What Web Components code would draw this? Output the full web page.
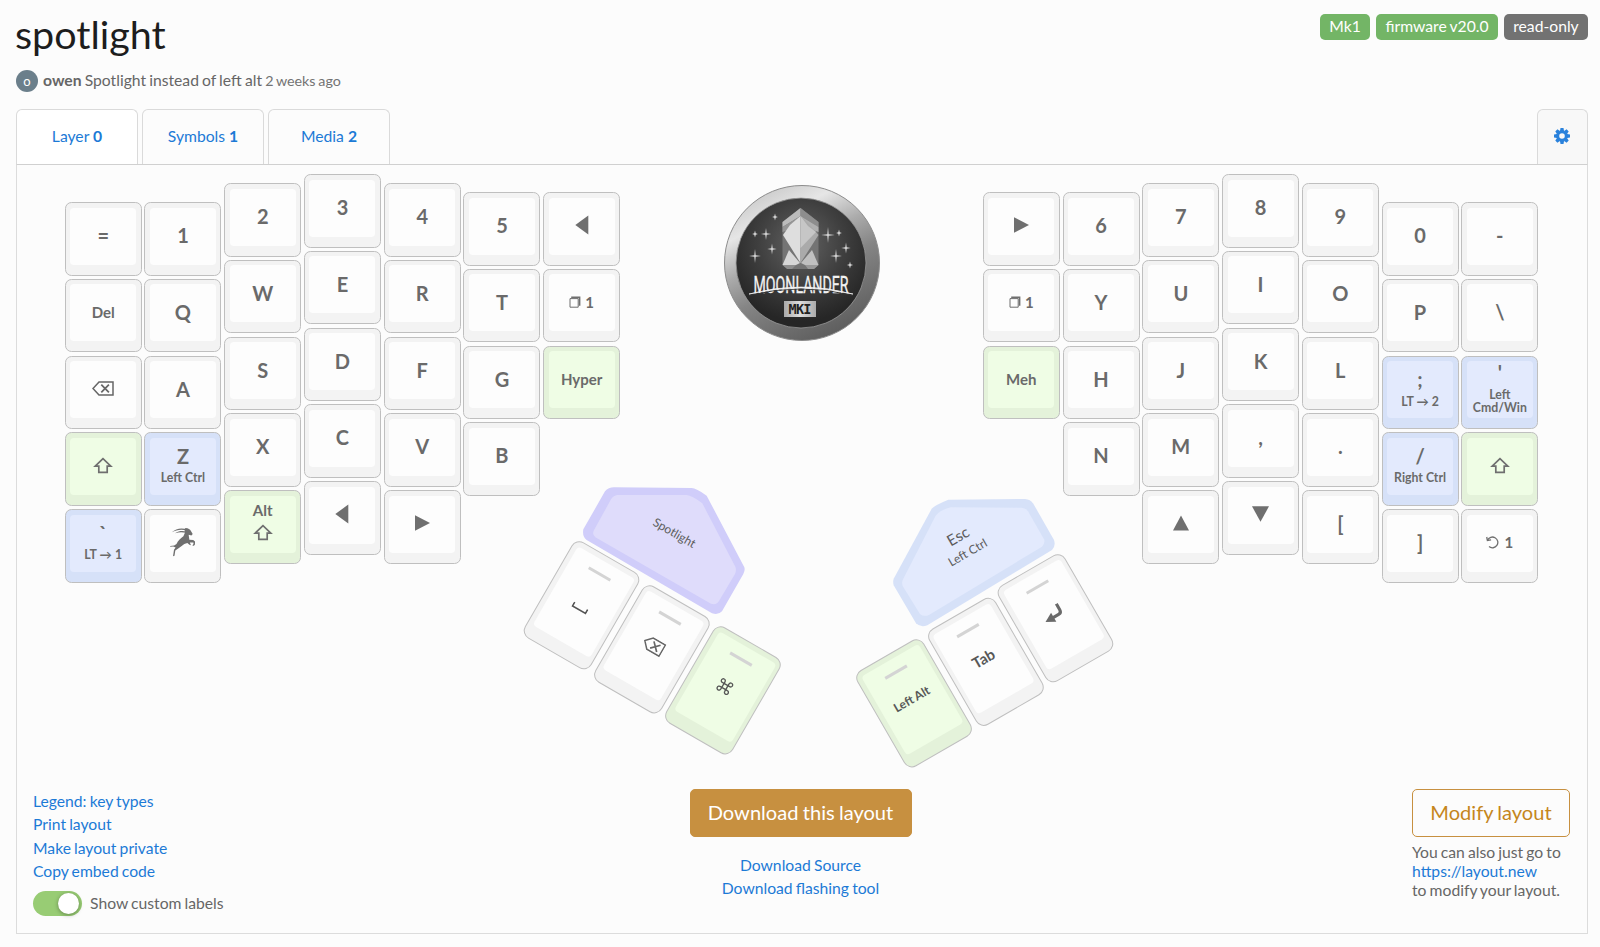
<!DOCTYPE html>
<html lang="en">
<head>
<meta charset="utf-8">
<title>spotlight</title>
<style>
	body {
		margin: 0;
		background: #fcfcfc;
		color: #666;
		font: 15.7px/1.2 Lato, "Liberation Sans", sans-serif;
		word-spacing: -.9px;
	}
</style>
</head>
<body>
<layout-page></layout-page>

<script>
// Small drawings used on the key caps
const ICONS = {
	left: '<svg width="14" height="20" viewBox="0 0 14 20"><path d="M13.3 .6v18.8L.3 10z" fill="#6f6f6f"/></svg>',
	right: '<svg width="15" height="16" viewBox="0 0 15 16"><path d="M0 .3v15.4L15 8z" fill="#6f6f6f"/></svg>',
	up: '<svg width="16" height="16" viewBox="0 0 16 16"><path d="M0 15.5h16L8 .5z" fill="#6f6f6f"/></svg>',
	down: '<svg width="17" height="16" viewBox="0 0 17 16"><path d="M0 .3h17L8.5 15.7z" fill="#6f6f6f"/></svg>',
	shift: '<svg width="20" height="17" viewBox="0 0 20 17" fill="none" stroke="#6f6f6f" stroke-width="1.7"><path d="M10 1.6L2.2 9.1h3.6v6.2h8.4V9.1h3.6z"/></svg>',
	back: '<svg width="22" height="15" viewBox="0 0 22 15" fill="none" stroke="#666" stroke-width="1.5"><path d="M7 1h14v13H7L1 7.5z"/><path d="M9.3 3.6l7.6 7.8M16.9 3.6l-7.6 7.8" stroke-width="1.7"/></svg>',
	layer: '<svg width="12" height="12" viewBox="0 0 12 12" fill="none" stroke="#6f6f6f"><path d="M1 2.6h8.2v8.6H1z" stroke-width="1"/><path d="M2.2 1.2h8.4v8.6" stroke-width="1.6"/></svg>',
	undo: '<svg width="14" height="13" viewBox="0 0 14 13" fill="none" stroke="#6f6f6f" stroke-width="1.3"><path d="M1.500 4.200A5.400 5.400 0 1 1 3 10.600"/><path d="M.7 1l.7 3.400 3.700-.5"/></svg>',
	space: '<svg style="margin-top:14px" width="17" height="6" viewBox="0 0 17 6" fill="none" stroke="#555" stroke-width="1.700"><path d="M1 0v4.600h15V0"/></svg>',
	cmd: '<svg width="14.5" height="14.5" viewBox="0 0 16 16" fill="none" stroke="#555" stroke-width="1.5"><path d="M5.5 5.5H3.4a2.2 2.2 0 1 1 2.1-2.1v9.2a2.2 2.2 0 1 1-2.1-2.1h9.2a2.2 2.2 0 1 1-2.1 2.1V3.4a2.2 2.2 0 1 1 2.1 2.1z"/></svg>',
	enter: '<svg width="21" height="17" viewBox="0 0 20 16"><path d="M17.6 .3v6.500q0 3.400-3.200 3.400H7" fill="none" stroke="#6a6a6a" stroke-width="3"/><path d="M0 10.200l9-5v10z" fill="#6a6a6a"/></svg>',
	goat: '<svg width="25" height="30" viewBox="0 0 25 30" fill="#6f6f6f"><path d="M1.800 5.200C6 1.300 12 .4 17.500 2.600L17 3.600C12 2 6.500 2.600 1.800 5.200z"/><path d="M5 6.200C9 3.800 13 3.600 16.500 4.800l-.3 1C12.500 5 9 5 5 6.200z"/><path d="M15.500.9c3 .3 4.500 1.400 5.300 2.800l1.900 3.400-1.300 1.300-2.600-.6c-.3 1.700.7 3.400.5 5l3.900.2 2 1.600-.4 3.400-1.800 1-.5-.7 1-1.300-.1-1.600-3.600.1 1.200 2.700-1.600-.5-2-1.800c-2.200.5-4 1.400-5.700 3.100l-3.500 2.600-2.900 1.900-.8 5.300-1.500.5 1-6.600 1.600-2.300-2.400-.8-3 .2v-.8l4-.6 2.300-1.300c1.300-3 3.900-5.700 6.900-7.800l1.500-3.600-.4-3.500z"/></svg>'
};

/**
 * One key cap. Attributes:
 *   main, sub - legends (text)
 *   icon, subicon - names from ICONS
 *   tone - green | blue
 *   thumb - taller cap with a homing bar
 */
class KeyCap extends HTMLElement {
	constructor() {
		super();
		this.attachShadow({mode:'open'});
	}

	connectedCallback() {
		const main = this.getAttribute('main') || '';
		const sub = this.getAttribute('sub');
		const icon = ICONS[this.getAttribute('icon')] || '';
		const subicon = ICONS[this.getAttribute('subicon')] || '';
		const small = main.length > 1 || (icon && main);
		this.shadowRoot.innerHTML = `
			<style>
				:host {
					box-sizing: border-box;
					display: flex;
					width: 77px;
					height: 73.5px;
					padding: 4.5px 4.5px 10px;
					border: 1px solid #bfbfbf;
					border-radius: 6.5px;
					background: #f3f3f3;
					color: #6a6a6a;
					font-weight: 700;
					text-align: center;
					word-spacing: 0;
				}
				:host([tone=green]) { background: #e4f2da; --face: #effde5; }
				:host([tone=blue]) { background: #d6e1f8; --face: #e3eafd; }
				:host([thumb]) {
					position: relative;
					height: 111px;
					padding: 5px 4.5px 13px;
					border-radius: 9px;
					color: #585858;
				}
				:host([thumb])::before {
					content: "";
					position: absolute;
					left: 25px;
					top: 17px;
					width: 25px;
					height: 3px;
					background: #d4d4d4;
				}
				.face {
					flex: 1;
					display: flex;
					flex-direction: column;
					align-items: center;
					justify-content: center;
					gap: 4.5px;
					padding-bottom: 2px;
					border-radius: 4px;
					background: var(--face, #fdfdfd);
				}
				:host([thumb]) .face { padding-bottom: 0; }
				.two { padding-bottom: 3px; }
				.stack { gap: 2.5px; padding-bottom: 8px; }
				.main {
					display: flex;
					align-items: center;
					gap: 4px;
					font-size: 20px;
					line-height: 22px;
				}
				.small { font-size: 15px; }
				.sub { font-size: 12.3px; line-height: 13.4px; margin: 0 4px; }
				:host([compact]) .small { font-size: 12.2px; }
				svg { display: block; }
			</style>
			<div class="face ${sub ? 'two' : ''} ${subicon ? 'stack' : ''}">
				<div class="main ${small ? 'small' : ''}">${icon}${main ? `<span>${main}</span>` : ''}</div>
				${sub ? `<div class="sub">${sub}</div>` : ''}${subicon}
			</div>
		`;
	}
}
customElements.define('key-cap', KeyCap);

// Vertical stack of keys, shifted down by its "drop"
class KeyColumn extends HTMLElement {
	constructor() {
		super();
		this.attachShadow({mode:'open'});
		this.shadowRoot.innerHTML = `
			<style>
				:host { display: flex; flex-direction: column; gap: 3.25px; }
			</style>
			<slot></slot>
		`;
	}

	connectedCallback() {
		this.style.marginTop = this.getAttribute('drop') + 'px';
	}
}
customElements.define('key-column', KeyColumn);

class MoonBadge extends HTMLElement {
	constructor() {
		super();
		this.attachShadow({mode:'open'});
		const star = (x, y, r) => `<path d="M${x} ${y - r}L${x + .7} ${y - .7}L${x + r * .85} ${y}L${x + .7} ${y + .7}L${x} ${y + r}L${x - .7} ${y + .7}L${x - r * .85} ${y}L${x - .7} ${y - .7}z"/>`;
		this.shadowRoot.innerHTML = `
			<style>
				:host { display: block; width: 156px; height: 156px; word-spacing: 0; }
				svg { display: block; }
			</style>
			<svg width="156" height="156" viewBox="0 0 156 156">
				<defs>
					<linearGradient id="ring" x1=".2" y1="0" x2=".7" y2="1">
						<stop offset="0" stop-color="#c4c4c4"/>
						<stop offset=".22" stop-color="#e6e6e6"/>
						<stop offset=".42" stop-color="#ababab"/>
						<stop offset=".6" stop-color="#858585"/>
						<stop offset="1" stop-color="#5b5b5b"/>
					</linearGradient>
					<radialGradient id="disc" cx=".5" cy=".35" r=".6">
						<stop offset="0" stop-color="#626262"/>
						<stop offset=".55" stop-color="#3f3f3f"/>
						<stop offset="1" stop-color="#262626"/>
					</radialGradient>
					<linearGradient id="plate"><stop offset="0" stop-color="#aaa"/><stop offset=".5" stop-color="#ddd"/><stop offset="1" stop-color="#aaa"/></linearGradient>
				</defs>
				<circle cx="78" cy="78" r="77.5" fill="url(#ring)" stroke="#8c8c8c"/>
				<circle cx="77" cy="78" r="65" fill="url(#disc)" stroke="#999" stroke-width=".8"/>
				<g fill="#dcdcdc">
					${star(31, 71, 7)}${star(42, 49, 6)}${star(31, 49, 3.4)}${star(48, 64, 5.5)}${star(51, 32, 3.4)}
					${star(104, 50, 8)}${star(115, 48, 3.4)}${star(122, 63, 5.5)}${star(112, 71, 7)}${star(126, 80, 3.6)}
				</g>
				<path d="M58.500 37L76.500 23L94.500 37V80L90 84H64L58.500 80z" fill="#747474"/>
				<path d="M58.500 37L76.500 23V31L58.500 42z" fill="#bcbcbc"/>
				<path d="M76.500 23L94.500 37V42L76.500 31z" fill="#8d8d8d"/>
				<path d="M58.500 42L76.500 31L70 43L58.500 47z" fill="#969696"/>
				<path d="M94.500 42L76.500 31L83 43L94.500 47z" fill="#b0b0b0"/>
				<path d="M59 50L66 40L76.500 31V78z" fill="#dedede"/>
				<path d="M76.500 31L86 40L94.500 50L76.500 78z" fill="#aaa"/>
				<path d="M76.500 31L84 41L92 47L76.500 63z" fill="#c6c6c6"/>
				<path d="M65 65L76 78L72 80H58.500z" fill="#d6d6d6"/>
				<path d="M88 65L77 78L81 80H94.500z" fill="#c0c0c0"/>
				<path d="M58.500 80H72L68 84H63z" fill="#8e8e8e"/>
				<path d="M81 80H94.500L90 84H84z" fill="#999"/>
				<text transform="translate(29.500 108.300) scale(1 1.650)" textLength="95" lengthAdjust="spacingAndGlyphs" font-family="Roboto, sans-serif" font-size="14.500" font-weight="400" fill="#f2f2f2" stroke="#f2f2f2" stroke-width=".2">MOONLANDER</text>
				<path d="M25 110.500Q77 97 129 110.500" fill="none" stroke="#333" stroke-width="1"/>
				<path d="M25 109Q77 95 129 109Q77 97 25 109z" fill="#f4f4f4" stroke="#f4f4f4" stroke-width=".7"/>
				<path d="M60 116H92V132H60z" fill="url(#plate)"/>
				<text x="76" y="129" text-anchor="middle" textLength="23" font-family="DejaVu Sans Mono, monospace" font-size="13.500" font-weight="700" fill="#222">MKI</text>
			</svg>
		`;
	}
}
customElements.define('moon-badge', MoonBadge);

// Three tall keys and the big key above them, tilted by 30 degrees
class ThumbCluster extends HTMLElement {
	constructor() {
		super();
		this.attachShadow({mode:'open'});
	}

	connectedCallback() {
		const right = this.getAttribute('side') === 'right';
		const big = right ? `
			<path fill="#d6e1f8" d="M325 59L555 57Q571 58 580 71L642 180Q648 198 636 210L262 436Q242 444 228 430L161 316Q158 305 161 296L275 86Q285 75 325 59z"/>
			<path fill="#e3eafd" d="M332 82L545 83Q557 84 564 94L612 178Q616 190 606 200L268 404Q252 412 240 402L188 318Q185 308 188 300L287 107Q300 90 332 82z"/>
			<text transform="translate(355 171) rotate(-30)" y="14" font-size="46">Esc</text>
			<text transform="translate(383 218) rotate(-30)" y="12" font-size="36">Left Ctrl</text>
		` : `
			<path fill="#d0cdfa" d="M312 52L545 54Q558 54 590 77L703 292Q706 300 700 312L636 424Q625 436 606 430L230 210Q216 198 220 178L285 64Q295 52 312 52z"/>
			<path fill="#dfdcfb" d="M322 75L530 75Q545 76 577 100L676 290Q680 300 675 312L627 393Q620 406 603 401L256 202Q246 195 251 182L303 88Q311 76 322 75z"/>
			<text transform="translate(493 189) rotate(30)" y="12" font-size="36">Spotlight</text>
		`;
		this.shadowRoot.innerHTML = `
			<style>
				:host { position: absolute; width: 290px; height: 300px; left: 493px; top: 305px; word-spacing: 0; }
				:host([side=right]) { left: 823px; top: 315px; }
				svg { position: absolute; left: 0; top: 0; }
				text { fill: #5c5c5c; text-anchor: middle; }
				.row {
					position: absolute;
					left: 21.6px;
					top: 121.1px;
					display: flex;
					gap: 5.5px;
					transform: rotate(30deg);
				}
				:host([side=right]) .row { left: 23.2px; top: 123.6px; transform: rotate(-30deg); }
				/* inner keys sit a little lower than the outermost one */
				::slotted(.low) { top: 2.9px; }
			</style>
			<svg width="290" height="150" viewBox="0 0 870 450">${big}</svg>
			<div class="row"><slot></slot></div>
		`;
	}
}
customElements.define('thumb-cluster', ThumbCluster);

const LEFT = [
	[28, 'main="="', 'main="Del"', 'icon="back"', 'icon="shift" tone="green"', 'main="`" sub="LT → 1" tone="blue"'],
	[28, 'main="1"', 'main="Q"', 'main="A"', 'main="Z" sub="Left Ctrl" tone="blue"', 'icon="goat"'],
	[9, 'main="2"', 'main="W"', 'main="S"', 'main="X"', 'main="Alt" subicon="shift" tone="green"'],
	[0, 'main="3"', 'main="E"', 'main="D"', 'main="C"', 'icon="left"'],
	[9, 'main="4"', 'main="R"', 'main="F"', 'main="V"', 'icon="right"'],
	[18, 'main="5"', 'main="T"', 'main="G"', 'main="B"'],
	[18, 'icon="left"', 'icon="layer" main="1"', 'main="Hyper" tone="green"']
];

const RIGHT = [
	[18, 'icon="right"', 'icon="layer" main="1"', 'main="Meh" tone="green"'],
	[18, 'main="6"', 'main="Y"', 'main="H"', 'main="N"'],
	[9, 'main="7"', 'main="U"', 'main="J"', 'main="M"', 'icon="up"'],
	[0, 'main="8"', 'main="I"', 'main="K"', 'main=","', 'icon="down"'],
	[9, 'main="9"', 'main="O"', 'main="L"', 'main="."', 'main="["'],
	[28, 'main="0"', 'main="P"', 'main=";" sub="LT → 2" tone="blue"', 'main="/" sub="Right Ctrl" tone="blue"', 'main="]"'],
	[28, 'main="-"', 'main="\\"', 'main="\'" sub="Left Cmd/Win" tone="blue"', 'icon="shift" tone="green"', 'icon="undo" main="1"']
];

class KeyBoard extends HTMLElement {
	constructor() {
		super();
		this.attachShadow({mode:'open'});
		const half = (columns) => columns.map(([drop, ...keys]) =>
			`<key-column drop="${drop}">${keys.map(k => `<key-cap ${k}></key-cap>`).join('')}</key-column>`
		).join('');
		this.shadowRoot.innerHTML = `
			<style>
				:host {
					box-sizing: border-box;
					display: flex;
					justify-content: space-between;
					align-items: flex-start;
					position: relative;
					height: 624px;
					padding: 9px 48.7px 0 47.7px;
				}
				.half { display: flex; gap: 2.75px; }
				moon-badge { margin: 11px 0 0 1px; }
			</style>
			<div class="half">${half(LEFT)}</div>
			<moon-badge></moon-badge>
			<div class="half">${half(RIGHT)}</div>
			<thumb-cluster side="left">
				<key-cap thumb icon="space"></key-cap>
				<key-cap thumb class="low" icon="back"></key-cap>
				<key-cap thumb class="low" icon="cmd" tone="green"></key-cap>
			</thumb-cluster>
			<thumb-cluster side="right">
				<key-cap thumb class="low" compact main="Left Alt" tone="green"></key-cap>
				<key-cap thumb class="low" main="Tab"></key-cap>
				<key-cap thumb icon="enter"></key-cap>
			</thumb-cluster>
		`;
	}
}
customElements.define('key-board', KeyBoard);

class TagLabel extends HTMLElement {
	constructor() {
		super();
		this.attachShadow({mode:'open'});
		this.shadowRoot.innerHTML = `
			<style>
				:host {
					box-sizing: border-box;
					display: block;
					height: 26px;
					padding: 0 9.3px;
					border-radius: 5px;
					background: #73b566;
					color: #fff;
					line-height: 25px;
				}
				:host([dark]) { background: #727272; }
			</style>
			<slot></slot>
		`;
	}
}
customElements.define('tag-label', TagLabel);

class LayerTab extends HTMLElement {
	constructor() {
		super();
		this.attachShadow({mode:'open'});
		this.shadowRoot.innerHTML = `
			<style>
				:host {
					box-sizing: border-box;
					display: flex;
					align-items: center;
					justify-content: center;
					width: 122px;
					height: 55px;
					padding-bottom: 2px;
					border: 1px solid #dadada;
					border-bottom: 0;
					border-radius: 6px 6px 0 0;
					color: #1c7ad6;
					white-space: pre;
					word-spacing: 0;
				}
				:host([active]) { background: #fff; }
				:host([settings]) { width: 51.5px; margin-left: auto; padding-right: 1px; background: #f8f8f8; }
			</style>
			<slot></slot>
		`;
	}
}
customElements.define('layer-tab', LayerTab);

class BigButton extends HTMLElement {
	constructor() {
		super();
		this.attachShadow({mode:'open'});
		this.shadowRoot.innerHTML = `
			<style>
				:host {
					box-sizing: border-box;
					display: flex;
					align-items: center;
					justify-content: center;
					width: 222px;
					height: 48px;
					padding-bottom: 1px;
					border: 1px solid #c79040;
					border-radius: 5px;
					background: #c79040;
					color: #fff;
					font-size: 20.1px;
				}
				:host([outline]) { width: 158px; background: none; color: #c5861c; }
			</style>
			<slot></slot>
		`;
	}
}
customElements.define('big-button', BigButton);

class ToggleSwitch extends HTMLElement {
	constructor() {
		super();
		this.attachShadow({mode:'open'});
		this.shadowRoot.innerHTML = `
			<style>
				:host { display: flex; align-items: center; gap: 8px; }
				.track {
					box-sizing: border-box;
					display: flex;
					justify-content: flex-end;
					width: 49px;
					height: 25px;
					padding: 2px 3px;
					border-radius: 13px;
					background: #98cc74;
				}
				.knob {
					width: 21px;
					height: 21px;
					border-radius: 50%;
					background: #fff;
					box-shadow: 0 1px 4px rgba(0, 0, 0, .35);
				}
			</style>
			<div class="track"><div class="knob"></div></div>
			<span><slot></slot></span>
		`;
	}
}
customElements.define('toggle-switch', ToggleSwitch);

class LayoutPage extends HTMLElement {
	constructor() {
		super();
		this.attachShadow({mode:'open'});
		this.shadowRoot.innerHTML = `
			<style>
				:host {
					box-sizing: border-box;
					display: flex;
					flex-direction: column;
					height: 947px;
					padding: 0 12px 13px 16px;
				}
				header { display: flex; justify-content: space-between; height: 109px; }
				h1 { margin: 10px 0 0 -1px; font-size: 39.5px; font-weight: 400; line-height: 48px; color: #1d1d1d; }
				.author { display: flex; align-items: center; gap: 5px; margin-top: 12px; white-space: pre; }
				.author span + span { margin-top: -2px; }
				.avatar {
					width: 22px;
					height: 22px;
					border-radius: 50%;
					background: #6b7f8b;
					color: #fff;
					font-size: 13px;
					line-height: 22px;
					text-align: center;
				}
				small { font-size: 14.3px; color: #737373; }
				.tags { display: flex; gap: 6px; margin-top: 14px; }
				nav { display: flex; gap: 4px; }
				main {
					flex: 1;
					border: 1px solid #dcdcdc;
					border-top-color: #d0d0d0;
				}
				footer { display: grid; grid-template-columns: 1fr auto 1fr; padding: 0 17px 0 16px; }
				a { color: #1c7ad6; }
				.links { display: flex; flex-direction: column; line-height: 23.4px; }
				.links a:first-child { margin-top: 1px; }
				.links toggle-switch { margin-top: 7px; line-height: 20px; }
				.center { align-items: center; margin-left: -2px; }
				.center big-button { margin-bottom: 17px; }
				.modify { justify-self: end; line-height: 19px; }
				.modify big-button { margin-bottom: 6px; }
			</style>
			<header>
				<div>
					<h1>spotlight</h1>
					<div class="author"><span class="avatar">o</span><span><b>owen</b> Spotlight instead of left alt <small>2 weeks ago</small></span></div>
				</div>
				<div class="tags">
					<tag-label>Mk1</tag-label>
					<tag-label>firmware v20.0</tag-label>
					<tag-label dark>read-only</tag-label>
				</div>
			</header>
			<nav>
				<layer-tab active>Layer <b>0</b></layer-tab>
				<layer-tab>Symbols <b>1</b></layer-tab>
				<layer-tab>Media <b>2</b></layer-tab>
				<layer-tab settings><svg width="16" height="16" viewBox="0 0 16 16"><g fill="#2a82dc"><path id="t" d="M6.500 0h3l.5 3H6zM6 13h4l-.5 3h-3z"/><use href="#t" transform="rotate(45 8 8)"/><use href="#t" transform="rotate(90 8 8)"/><use href="#t" transform="rotate(135 8 8)"/></g><circle cx="8" cy="8" r="4.300" fill="none" stroke="#2a82dc" stroke-width="3"/></svg></layer-tab>
			</nav>
			<main>
				<key-board></key-board>
				<footer>
					<div class="links">
						<a>Legend: key types</a>
						<a>Print layout</a>
						<a>Make layout private</a>
						<a>Copy embed code</a>
						<toggle-switch>Show custom labels</toggle-switch>
					</div>
					<div class="links center">
						<big-button>Download this layout</big-button>
						<a>Download Source</a>
						<a>Download flashing tool</a>
					</div>
					<div class="modify">
						<big-button outline>Modify layout</big-button>
						You can also just go to<br><a>https://layout.new</a><br>to modify your layout.
					</div>
				</footer>
			</main>
		`;
	}
}
customElements.define('layout-page', LayoutPage);
</script>
</body>
</html>
